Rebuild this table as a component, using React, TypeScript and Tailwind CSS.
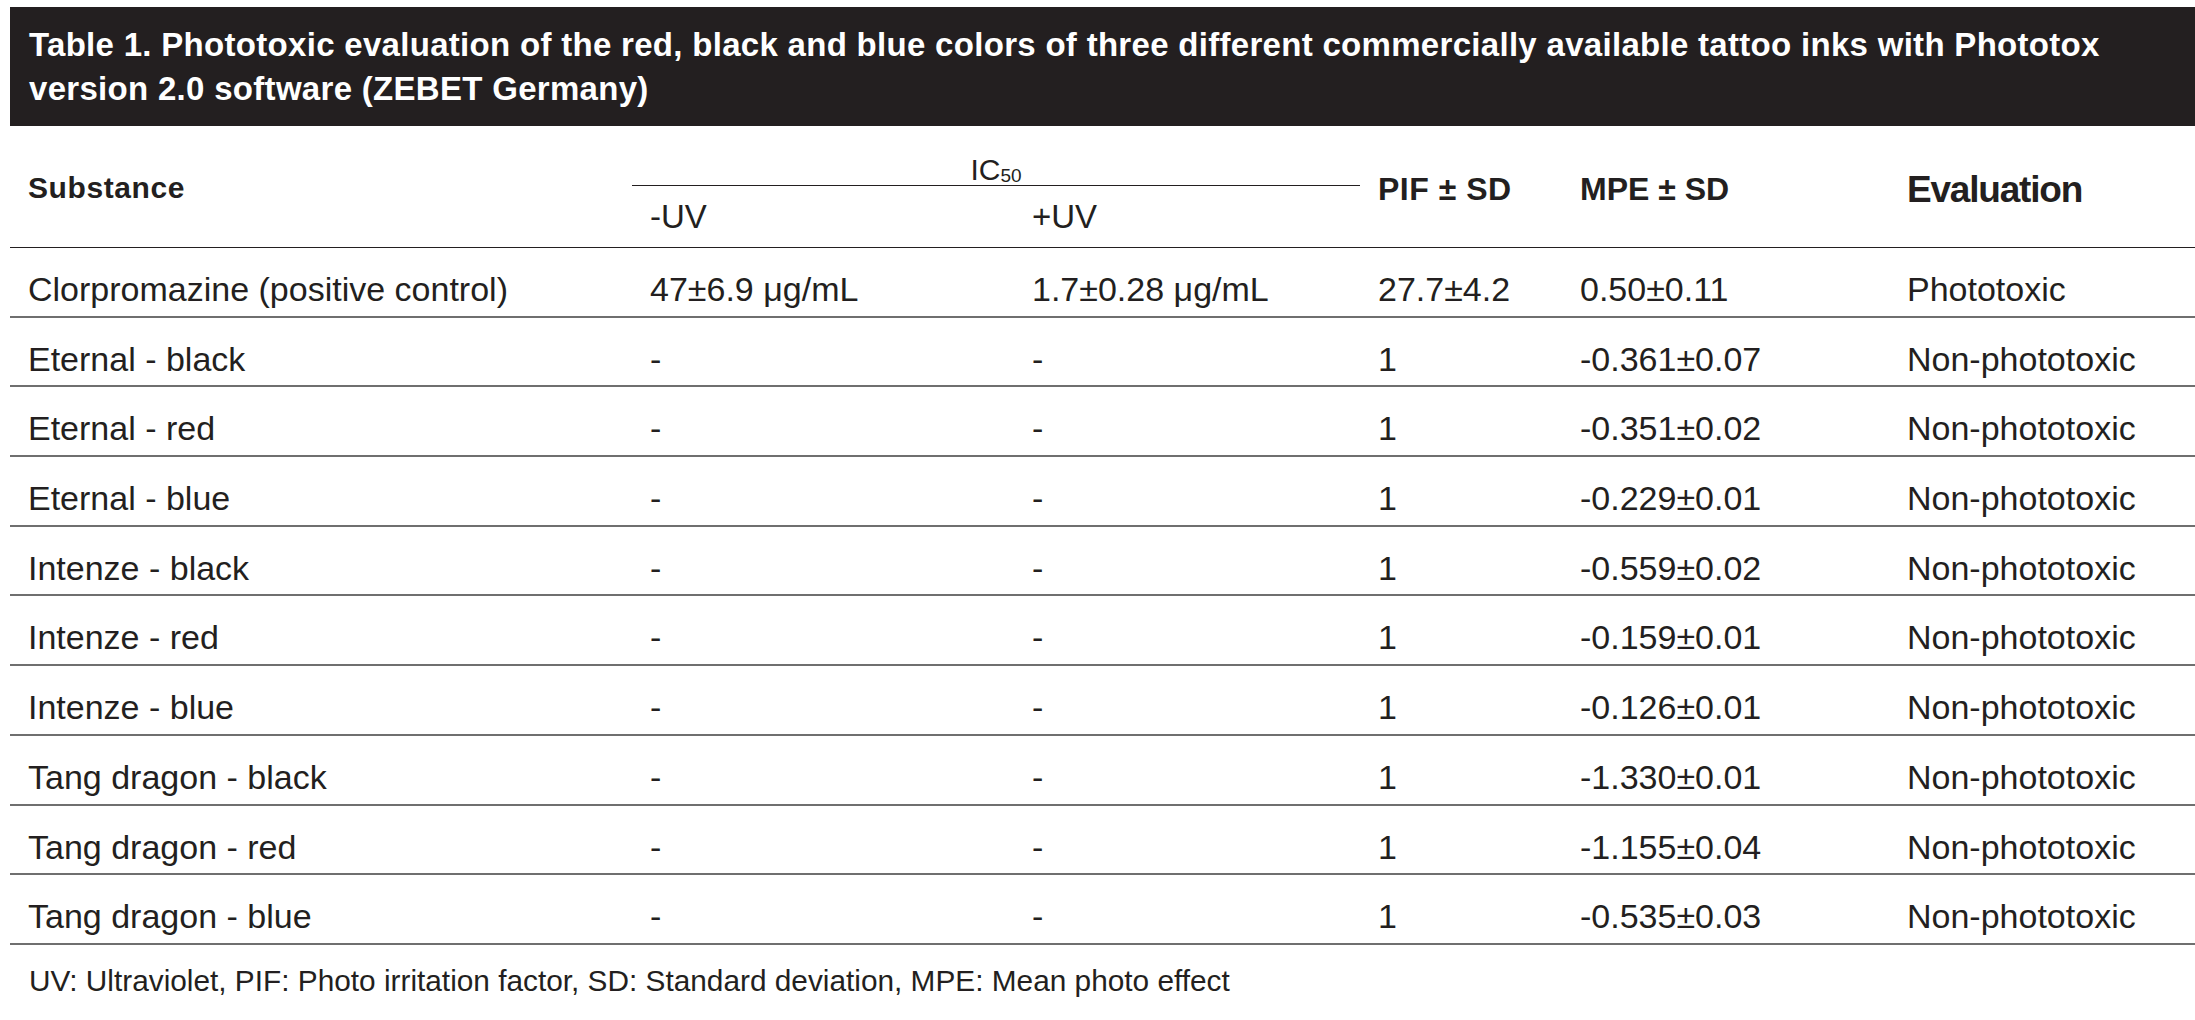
import React from "react";

const rows: [string, string, string, string, string, string][] = [
  ["Clorpromazine (positive control)", "47±6.9 μg/mL", "1.7±0.28 μg/mL", "27.7±4.2", "0.50±0.11", "Phototoxic"],
  ["Eternal - black", "-", "-", "1", "-0.361±0.07", "Non-phototoxic"],
  ["Eternal - red", "-", "-", "1", "-0.351±0.02", "Non-phototoxic"],
  ["Eternal - blue", "-", "-", "1", "-0.229±0.01", "Non-phototoxic"],
  ["Intenze - black", "-", "-", "1", "-0.559±0.02", "Non-phototoxic"],
  ["Intenze - red", "-", "-", "1", "-0.159±0.01", "Non-phototoxic"],
  ["Intenze - blue", "-", "-", "1", "-0.126±0.01", "Non-phototoxic"],
  ["Tang dragon - black", "-", "-", "1", "-1.330±0.01", "Non-phototoxic"],
  ["Tang dragon - red", "-", "-", "1", "-1.155±0.04", "Non-phototoxic"],
  ["Tang dragon - blue", "-", "-", "1", "-0.535±0.03", "Non-phototoxic"],
];

const cols = "grid grid-cols-[622px_382px_346px_202px_327px_1fr]";

export default function App() {
  return (
    <div
      className="w-[2195px] h-[1020px] bg-white pl-[10px] pt-[7px] text-[#231f20] overflow-hidden"
      style={{ fontFamily: '"Liberation Sans", Arial, sans-serif' }}
    >
      <div className="bg-[#231f20] text-white font-bold text-[33px] leading-[44px] tracking-[0.3px] pl-[19px] pt-[16px] h-[119px]">
        <div className="whitespace-nowrap">
          Table 1. Phototoxic evaluation of the red, black and blue colors of three different commercially available tattoo inks with Phototox
        </div>
        <div className="whitespace-nowrap">version 2.0 software (ZEBET Germany)</div>
      </div>

      <div className={`${cols} grid-rows-[60px_61px] border-b-[1.5px] border-[#231f20]`}>
        <div className="row-span-2 pl-[18px] pt-[47px] text-[30px] leading-[30px] font-bold tracking-[0.6px]">
          Substance
        </div>
        <div className="col-span-2 border-b-[1.5px] border-[#231f20] flex justify-center pt-[29px]">
          <span className="text-[30px] leading-[30px]">
            IC<span className="text-[19px] align-[-2px]">50</span>
          </span>
        </div>
        <div className="row-span-2 pl-[18px] pt-[47px] text-[32px] leading-[32px] font-bold tracking-[0.5px]">
          PIF ± SD
        </div>
        <div className="row-span-2 pl-[18px] pt-[47px] text-[32px] leading-[32px] font-bold">
          MPE ± SD
        </div>
        <div className="row-span-2 pl-[18px] pt-[45px] text-[37px] leading-[37px] font-bold tracking-[-1.2px]">
          Evaluation
        </div>
        <div className="pl-[18px] pt-[14px] text-[33px] leading-[33px]">-UV</div>
        <div className="pl-[18px] pt-[14px] text-[33px] leading-[33px]">+UV</div>
      </div>

      {rows.map((r, i) => (
        <div
          key={i}
          className={`${cols} h-[69.7px] border-b-2 border-[#6f6f6f] text-[34px] leading-[34px] pt-[24px]`}
        >
          {r.map((c, j) => (
            <div key={j} className="pl-[18px] whitespace-nowrap">
              {c}
            </div>
          ))}
        </div>
      ))}

      <div className="pl-[19px] pt-[21px] text-[29.8px] leading-[29.8px] whitespace-nowrap">
        UV: Ultraviolet, PIF: Photo irritation factor, SD: Standard deviation, MPE: Mean photo effect
      </div>
    </div>
  );
}
